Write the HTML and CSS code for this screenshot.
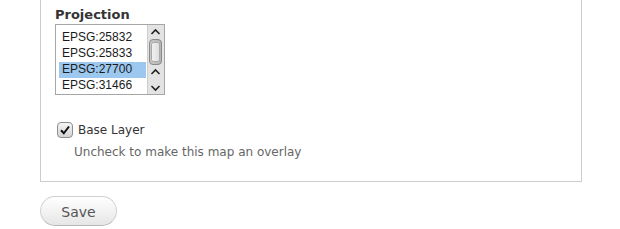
FILE: index.html
```html
<!DOCTYPE html>
<html>
<head>
<meta charset="utf-8">
<link rel="stylesheet" href="styles.css">
</head>
<body>
<div class="page">
  <div class="panel">
    <div class="field">
      <div class="field-label">Projection</div>
      <div class="listbox">
        <div class="options">
          <div class="option">EPSG:25832</div>
          <div class="option">EPSG:25833</div>
          <div class="option selected">EPSG:27700</div>
          <div class="option">EPSG:31466</div>
        </div>
        <div class="scrollbar">
          <svg width="17" height="69" viewBox="0 0 17 69">
            <defs>
              <linearGradient id="thumbg" x1="0" y1="0" x2="1" y2="0">
                <stop offset="0" stop-color="#c9c9c9"/>
                <stop offset="1" stop-color="#b4b4b4"/>
              </linearGradient>
              <linearGradient id="thumbi" x1="0" y1="0" x2="1" y2="0">
                <stop offset="0" stop-color="#f2f2f2"/>
                <stop offset="1" stop-color="#dedede"/>
              </linearGradient>
            </defs>
            <rect x="0" y="0" width="17" height="69" fill="#e3e3e3"/>
            <line x1="0.5" y1="0" x2="0.5" y2="69" stroke="#cdcdcd"/>
            <polyline points="4.5,9 8.5,5 12.5,9" fill="none" stroke="#222" stroke-width="1.6"/>
            <rect x="2.5" y="14.5" width="12" height="25" rx="3.5" fill="url(#thumbg)" stroke="#8a8a8a"/>
            <rect x="4.5" y="17.5" width="8" height="19" rx="2" fill="url(#thumbi)" stroke="#a8a8a8"/>
            <polyline points="4.5,49 8.5,45 12.5,49" fill="none" stroke="#222" stroke-width="1.6"/>
            <polyline points="4.5,61 8.5,65 12.5,61" fill="none" stroke="#222" stroke-width="1.6"/>
          </svg>
        </div>
      </div>
    </div>
    <div class="check-field">
      <div class="check-row">
        <span class="checkbox">
          <svg width="16" height="16" viewBox="0 0 16 16">
            <defs>
              <linearGradient id="cbg" x1="0" y1="0" x2="0" y2="1">
                <stop offset="0" stop-color="#f6f6f6"/>
                <stop offset="1" stop-color="#d2d2d2"/>
              </linearGradient>
            </defs>
            <rect x="0.5" y="0.5" width="15" height="15" rx="3.5" fill="url(#cbg)" stroke="#8e8e8e"/>
            <polyline points="4,8.3 6.8,11.3 12,4.5" fill="none" stroke="#111" stroke-width="2"/>
          </svg>
        </span>
        <span class="check-label">Base Layer</span>
      </div>
      <div class="description">Uncheck to make this map an overlay</div>
    </div>
  </div>
  <button class="btn" type="button">Save</button>
</div>
</body>
</html>
```

FILE: styles.css
```css
html, body {
  margin: 0;
  padding: 0;
  background: #fff;
}

body {
  font-family: "DejaVu Sans", sans-serif;
  color: #333;
  overflow: hidden;
}

.page {
  padding-left: 40px;
}

.panel {
  box-sizing: border-box;
  width: 542px;
  margin-top: -11px;
  border: 1px solid #cccccc;
  padding: 17px 14px 21px 14px;
}

.field-label {
  font-weight: bold;
  font-size: 13px;
  line-height: 16px;
  color: #333;
  margin-bottom: 1px;
}

.listbox {
  display: flex;
  width: 110px;
  height: 71px;
  box-sizing: border-box;
  border: 1px solid #a6a6a6;
  background: #fff;
}

.options {
  width: 87px;
  padding: 5px 0 0 3px;
  margin-right: 1px;
  overflow: hidden;
  font-family: "Liberation Sans", Arial, sans-serif;
  font-size: 12px;
  color: #1a1a1a;
}

.option {
  height: 16px;
  line-height: 15px;
  padding-left: 3px;
  box-sizing: border-box;
  white-space: nowrap;
}

.option.selected {
  background: #9cc8ef;
}

.scrollbar {
  width: 17px;
  height: 69px;
}

.scrollbar svg {
  display: block;
}

.check-field {
  margin-top: 27px;
}

.check-row {
  display: flex;
  align-items: center;
  height: 16px;
  padding-left: 2px;
}

.checkbox {
  display: block;
  width: 16px;
  height: 16px;
}

.checkbox svg {
  display: block;
}

.check-label {
  margin-left: 5px;
  font-size: 12px;
  line-height: 16px;
  color: #333;
}

.description {
  margin-top: 6px;
  margin-left: 19px;
  font-size: 12px;
  line-height: 16px;
  color: #666;
}

.btn {
  display: block;
  margin-top: 14px;
  width: 77px;
  height: 30px;
  box-sizing: border-box;
  padding: 2px 0 0 0;
  border: 1px solid #d0d0d0;
  border-bottom-color: #b8b8b8;
  border-radius: 15px;
  background: linear-gradient(#ffffff, #e6e6e6);
  font-family: "DejaVu Sans", sans-serif;
  font-size: 14px;
  line-height: 18px;
  color: #555;
  text-align: center;
}
```
